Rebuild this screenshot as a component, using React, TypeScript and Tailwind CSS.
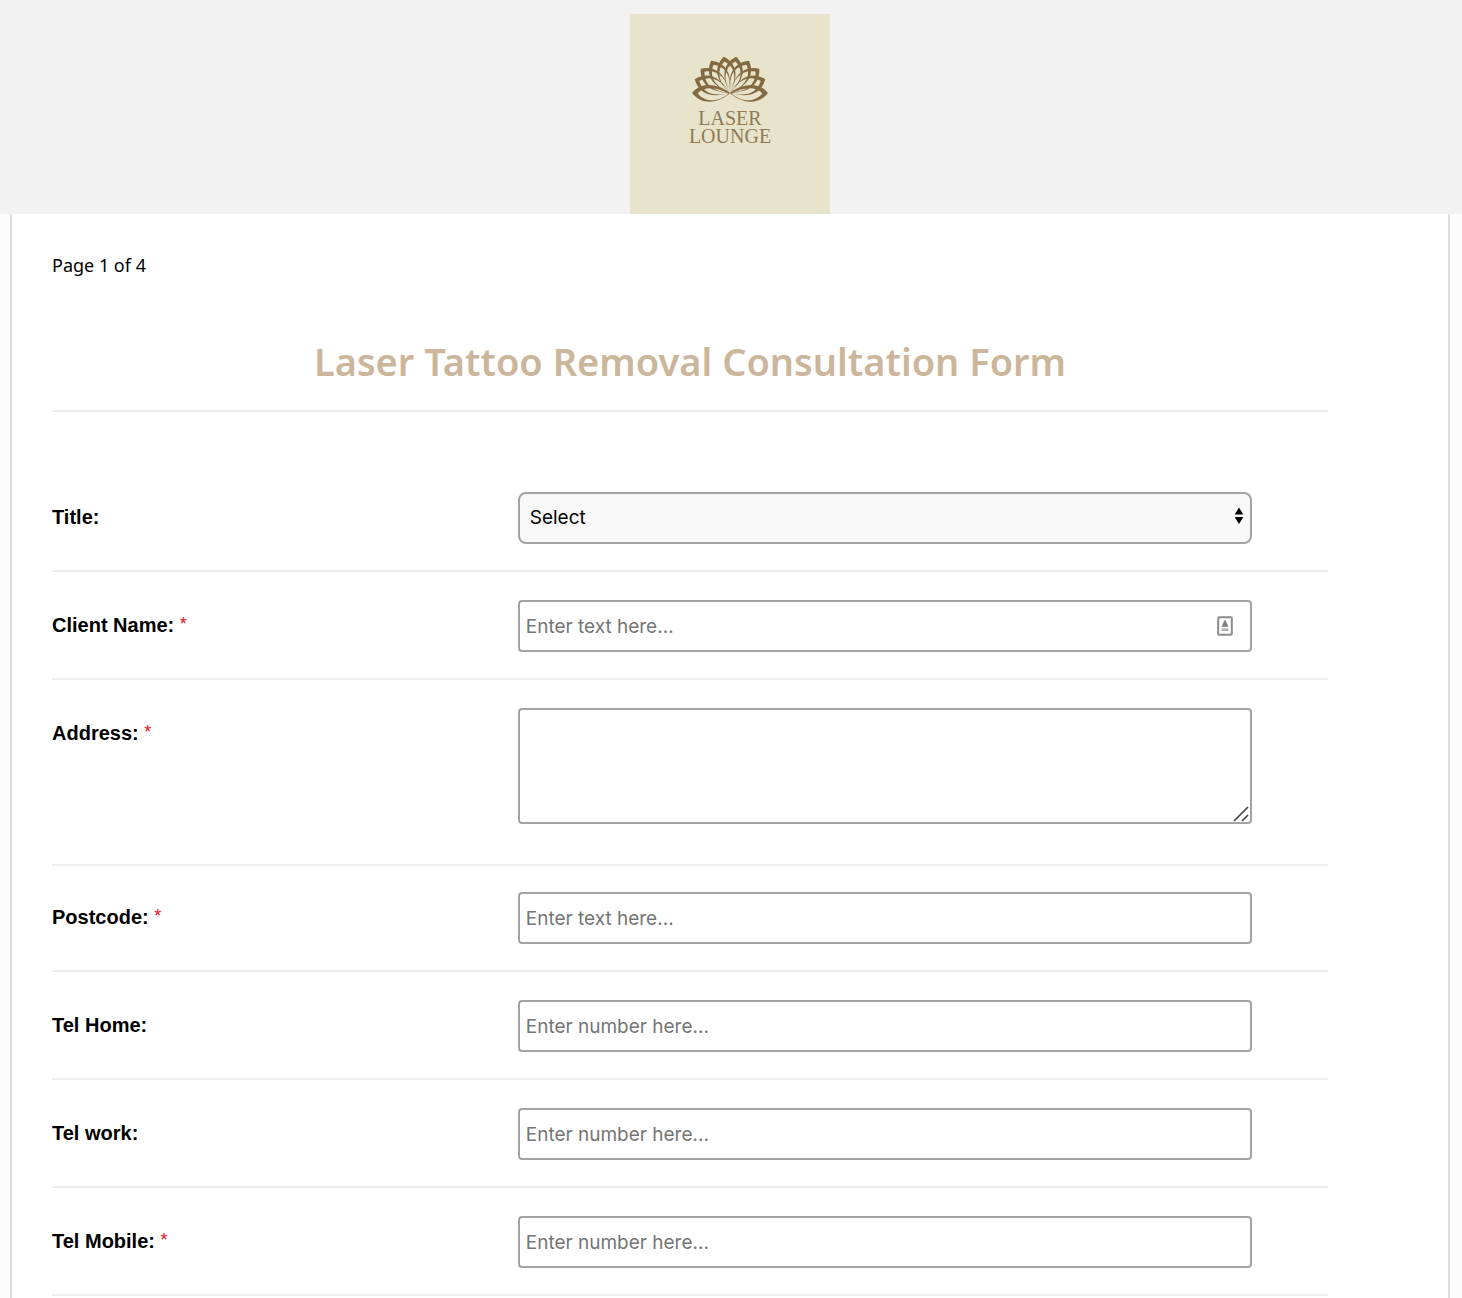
import React from "react";

interface Field {
  id: string;
  label: string;
  kind: "select" | "text" | "textarea" | "number";
  required?: boolean;
  autofill?: boolean;
  spacing: string;
}

const fields: Field[] = [
  { id: "title", label: "Title:", kind: "select", spacing: "pt-20 pb-[26px]" },
  { id: "client-name", label: "Client Name:", kind: "text", required: true, autofill: true, spacing: "pt-7 pb-[26px]" },
  { id: "address", label: "Address:", kind: "textarea", required: true, spacing: "pt-7 pb-10" },
  { id: "postcode", label: "Postcode:", kind: "text", required: true, spacing: "pt-[26px] pb-[26px]" },
  { id: "tel-home", label: "Tel Home:", kind: "number", spacing: "pt-7 pb-[26px]" },
  { id: "tel-work", label: "Tel work:", kind: "number", spacing: "pt-7 pb-[26px]" },
  { id: "tel-mobile", label: "Tel Mobile:", kind: "number", required: true, spacing: "pt-7 pb-[26px]" },
];

// One hollow petal from the base of the flower to its tip
const petalPath = (tipX: number, tipY: number) => {
  const baseX = 114;
  const baseY = 111;
  const outline = (scale: number, width: number) => {
    const dx = (tipX - baseX) * scale;
    const dy = (tipY - baseY) * scale;
    const len = Math.hypot(dx, dy);
    const px = (-dy / len) * width;
    const py = (dx / len) * width;
    const at = (t: number, side: number) => `${baseX + dx * t + px * side} ${baseY + dy * t + py * side}`;
    return `M${baseX} ${baseY}C${at(0.4, 0.9)} ${at(0.75, 1)} ${at(1, 0)}C${at(0.75, -1)} ${at(0.4, -0.9)} ${baseX} ${baseY}Z`;
  };
  return outline(1, 38) + outline(0.87, 31);
};

// Right half of the lotus, the left half is mirrored
const petals = [
  petalPath(133, 2),
  petalPath(171, 14),
  petalPath(202, 38),
  petalPath(220, 70),
  "M114 111C138 90 196 70 228 111C192 156 138 134 114 111ZM119 113C146 136 184 142 211 113C190 88 148 96 119 113Z",
];

const Lotus = () => (
  <svg viewBox="0 0 228 138" className="h-[46px] w-[76px]" fill="#846a40" fillRule="evenodd" aria-hidden="true">
    {petals.map((d) => (
      <path key={d} d={d} />
    ))}
    <g transform="translate(228 0) scale(-1 1)">
      {petals.map((d) => (
        <path key={d} d={d} />
      ))}
    </g>
  </svg>
);

const Logo = () => (
  <div className="flex size-[200px] flex-col items-center bg-[#e8e4cc] pt-[42px]">
    <Lotus />
    <p className="mt-[7px] text-center font-['Liberation_Serif',serif] text-[20px] leading-[18px] text-[#8f7a55]">
      LASER
      <br />
      LOUNGE
    </p>
  </div>
);

const AutofillIcon = () => (
  <svg
    viewBox="0 0 16 20"
    className="pointer-events-none absolute top-1/2 right-[19px] h-5 w-4 -translate-y-1/2"
    aria-hidden="true"
  >
    <rect x="1.2" y="1.2" width="13.6" height="17.6" rx="1" fill="#fff" stroke="#8c8c8c" strokeWidth="2" />
    <path d="M8 4l1.500 3L11 10.500H5L6.500 7z" fill="#808080" stroke="#808080" strokeWidth="0.6" />
    <path d="M4.500 12.500h7v2.500h-7z" fill="#b0b0b0" />
  </svg>
);

const boxClass =
  "block w-full border-2 border-[#a3a3a3] bg-white font-[Inter,sans-serif] text-[19px] text-black placeholder:text-[#757575] outline-none focus:border-[#c9b59b]";

const FieldControl: React.FC<{ field: Field }> = ({ field }) => {
  if (field.kind === "select") {
    return (
      <div className="relative">
        <select
          id={field.id}
          className="block h-[52px] w-full appearance-none rounded-lg border-2 border-[#a3a3a3] bg-[#f8f8f8] px-[10px] font-[Inter,sans-serif] text-[19px] text-black outline-none"
        >
          <option>Select</option>
          <option>Mr</option>
          <option>Mrs</option>
          <option>Miss</option>
          <option>Ms</option>
        </select>
        <svg viewBox="0 0 10 18" className="pointer-events-none absolute top-[15px] right-2 h-[18px] w-[10px]" aria-hidden="true">
          <path d="M5 0.500L9.300 7.500H0.700zM5 17L9.300 10H0.700z" fill="#000" />
        </svg>
      </div>
    );
  }

  if (field.kind === "textarea") {
    return (
      <div className="relative">
        <textarea id={field.id} className={`${boxClass} h-[116px] resize-none rounded-[4px] px-[6px] py-2`} />
        <svg viewBox="0 0 16 16" className="pointer-events-none absolute right-[3px] bottom-[2px] size-4" aria-hidden="true">
          <path d="M1 15L15 1M9 15L15 9" stroke="#444" strokeWidth="1.700" />
        </svg>
      </div>
    );
  }

  return (
    <div className="relative">
      <input
        id={field.id}
        type={field.kind}
        placeholder={field.kind === "number" ? "Enter number here..." : "Enter text here..."}
        className={`${boxClass} h-[52px] rounded-[4px] px-[6px]`}
      />
      {field.autofill && <AutofillIcon />}
    </div>
  );
};

const FormRow: React.FC<{ field: Field }> = ({ field }) => (
  <div className={`flex border-b-2 border-[#eeeeee] ${field.spacing}`}>
    <label
      htmlFor={field.id}
      className="w-[36.5%] shrink-0 pt-3 font-['Liberation_Sans',Arial,sans-serif] text-[20px] leading-[26px] font-bold text-black"
    >
      {field.label}
      {field.required && (
        <>
          {" "}
          <span className="align-text-top text-[18px] leading-5 font-normal text-[#e8101c]">*</span>
        </>
      )}
    </label>
    <div className="w-[57.55%]">
      <FieldControl field={field} />
    </div>
  </div>
);

const App: React.FC = () => {
  return (
    <div className="flex min-h-screen flex-col bg-[#fcfcfc]">
      <header className="flex justify-center bg-[#f2f2f2] pt-[14px] pr-3 pl-[10px]">
        <Logo />
      </header>

      <main className="mr-3 ml-[10px] flex-1 border-x-2 border-[#dddddd] bg-white pr-[120px] pl-10">
        <p className="pt-[39px] font-['Noto_Sans',sans-serif] text-[18px] leading-6 text-black">Page 1 of 4</p>

        <form onSubmit={(e) => e.preventDefault()}>
          <h1 className="border-b-2 border-[#eeeeee] pt-[60px] pb-[25px] text-center font-['Noto_Sans',sans-serif] text-[38px] leading-[48px] font-semibold text-[#cbb69c]">
            Laser Tattoo Removal Consultation Form
          </h1>

          {fields.map((field) => (
            <FormRow key={field.id} field={field} />
          ))}
        </form>
      </main>
    </div>
  );
};

export default App;
